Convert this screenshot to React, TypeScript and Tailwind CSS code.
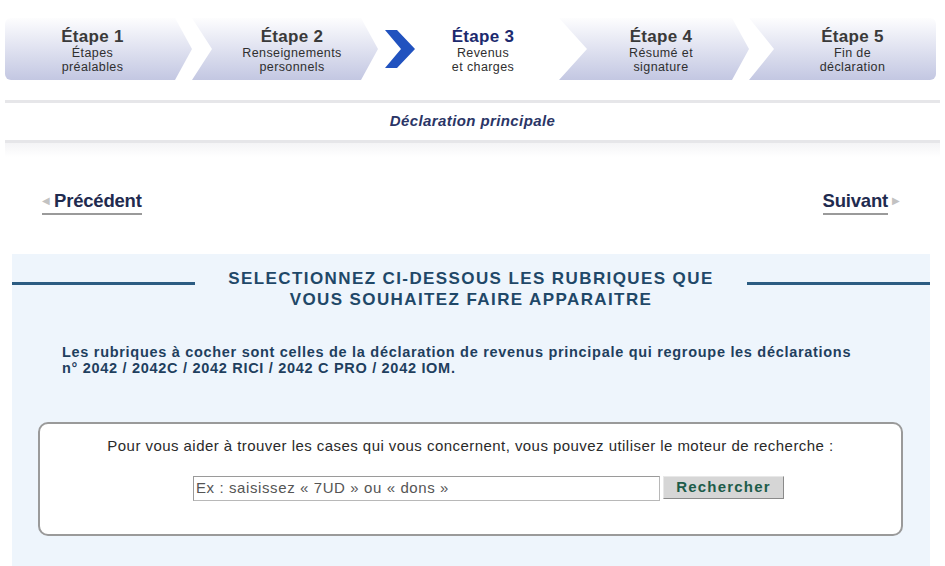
import React from "react";

const F = { fontFamily: '"Liberation Sans", Arial, sans-serif' };

function StepText({ title, l1, l2, active }: { title: string; l1: string; l2: string; active?: boolean }) {
  return (
    <div className="flex flex-col items-center leading-none pt-[4px]">
      <div className={`text-[17px] font-bold tracking-[0.3px] ${active ? "text-[#1c2a6e]" : "text-[#3a3a3a]"}`}>{title}</div>
      <div className="mt-[1px] text-[12.5px] leading-[14px] tracking-[0.4px] text-[#2f2f2f] text-center">
        <div>{l1}</div>
        <div>{l2}</div>
      </div>
    </div>
  );
}

export default function App() {
  return (
    <div style={F} className="w-[945px] h-[566px] bg-white overflow-hidden">
      {/* steps */}
      <div className="flex px-[5px] pt-[18px] h-[80px]">
        <div className="w-[187px] h-[62px] rounded-l-[6px] bg-linear-to-b from-[#fdfdfe] to-[#c3c7e2] [clip-path:polygon(0_0,170px_0,187px_50%,170px_100%,0_100%)] flex items-center justify-center pr-[12px]">
          <StepText title="Étape 1" l1="Étapes" l2="préalables" />
        </div>
        <div className="w-[186px] h-[62px] bg-linear-to-b from-[#fdfdfe] to-[#c3c7e2] [clip-path:polygon(0_0,169px_0,186px_50%,169px_100%,0_100%,20px_50%)] flex items-center justify-center pl-[14px]">
          <StepText title="Étape 2" l1="Renseignements" l2="personnels" />
        </div>
        <div className="w-[181px] h-[62px] flex items-center">
          <svg width="30" height="38" viewBox="0 0 30 38" className="ml-[7px]">
            <polygon points="0,0 12,0 30,19 12,38 0,38 16,19" fill="#2152bf" />
          </svg>
          <div className="flex-1 flex justify-center pr-[8px]">
            <StepText title="Étape 3" l1="Revenus" l2="et charges" active />
          </div>
        </div>
        <div className="w-[190px] h-[62px] bg-linear-to-b from-[#fdfdfe] to-[#c3c7e2] [clip-path:polygon(0_0,173px_0,190px_50%,173px_100%,0_100%,28px_50%)] flex items-center justify-center pl-[14px]">
          <StepText title="Étape 4" l1="Résumé et" l2="signature" />
        </div>
        <div className="w-[187px] h-[62px] rounded-r-[6px] bg-linear-to-b from-[#fdfdfe] to-[#c3c7e2] [clip-path:polygon(0_0,187px_0,187px_100%,0_100%,25px_50%)] flex items-center justify-center pl-[20px]">
          <StepText title="Étape 5" l1="Fin de" l2="déclaration" />
        </div>
      </div>

      {/* sub title band */}
      <div className="mx-[5px] mt-[20px] h-[3px] bg-[#e6e6e9]" />
      <div className="h-[37px] flex items-center justify-center">
        <span className="italic font-bold text-[15px] tracking-[0.4px] text-[#2a3566]">Déclaration principale</span>
      </div>
      <div className="mx-[5px] h-[3px] bg-[#e6e6e9]" />
      <div className="mx-[5px] h-[14px] bg-linear-to-b from-[#f4f4f6] to-white" />

      {/* nav */}
      <div className="flex justify-between px-[42px] pt-[35px] h-[97px]">
        <div className="flex flex-col">
          <div className="flex items-center gap-[4px] leading-none">
            <span className="text-[#c2c2c2] text-[10px]">◀</span>
            <span className="text-[18.5px] font-bold text-[#1f2b4f] tracking-[-0.2px]">Précédent</span>
          </div>
          <div className="mt-[2px] h-[2px] bg-[#9a9a9a]" />
        </div>
        <div className="flex flex-col mr-[3px]">
          <div className="flex items-center gap-[4px] leading-none">
            <span className="text-[18.5px] font-bold text-[#1f2b4f] tracking-[-0.2px]">Suivant</span>
            <span className="text-[#c2c2c2] text-[10px]">▶</span>
          </div>
          <div className="mt-[2px] h-[2px] bg-[#9a9a9a] mr-[12px]" />
        </div>
      </div>

      {/* panel */}
      <div className="mx-[12px] w-[918px] h-[314px] bg-[#eef5fc] pt-[14px]">
        <div className="flex items-start">
          <div className="w-[183px] h-[3px] bg-[#2c5c82] mt-[14px]" />
          <div className="flex-1 text-center text-[17px] leading-[21px] font-bold tracking-[1.4px] text-[#1f4868]">
            <div>SELECTIONNEZ CI-DESSOUS LES RUBRIQUES QUE</div>
            <div>VOUS SOUHAITEZ FAIRE APPARAITRE</div>
          </div>
          <div className="w-[183px] h-[3px] bg-[#2c5c82] mt-[14px]" />
        </div>
        <div className="mt-[34px] pl-[50px] text-[14.5px] leading-[16px] font-bold tracking-[0.7px] text-[#1f3f5e] whitespace-nowrap">
          <div>Les rubriques à cocher sont celles de la déclaration de revenus principale qui regroupe les déclarations</div>
          <div>n° 2042 / 2042C / 2042 RICI / 2042 C PRO / 2042 IOM.</div>
        </div>
        <div className="mt-[46px] ml-[26px] w-[865px] h-[114px] bg-white border-2 border-[#9a9a9a] rounded-[10px] flex flex-col items-center pt-[11px]">
          <div className="text-[15px] tracking-[0.45px] text-[#2a2a2a]">
            Pour vous aider à trouver les cases qui vous concernent, vous pouvez utiliser le moteur de recherche :
          </div>
          <div className="mt-[18px] flex items-start ml-[36px]">
            <div className="w-[467px] h-[25px] border border-[#b8b8b8] border-t-[#9a9a9a] border-l-[#9a9a9a] bg-white flex items-center px-[2px] text-[15px] tracking-[0.6px] text-[#555]">
              Ex : saisissez « 7UD » ou « dons »
            </div>
            <div className="ml-[3px] w-[121px] h-[23px] bg-[#d6d6d6] border border-[#e8e8e8] border-r-[#8a8a8a] border-b-[#8a8a8a] flex items-center justify-center text-[15px] font-bold tracking-[1.2px] text-[#1d5c4a]">
              Rechercher
            </div>
          </div>
        </div>
      </div>
    </div>
  );
}
